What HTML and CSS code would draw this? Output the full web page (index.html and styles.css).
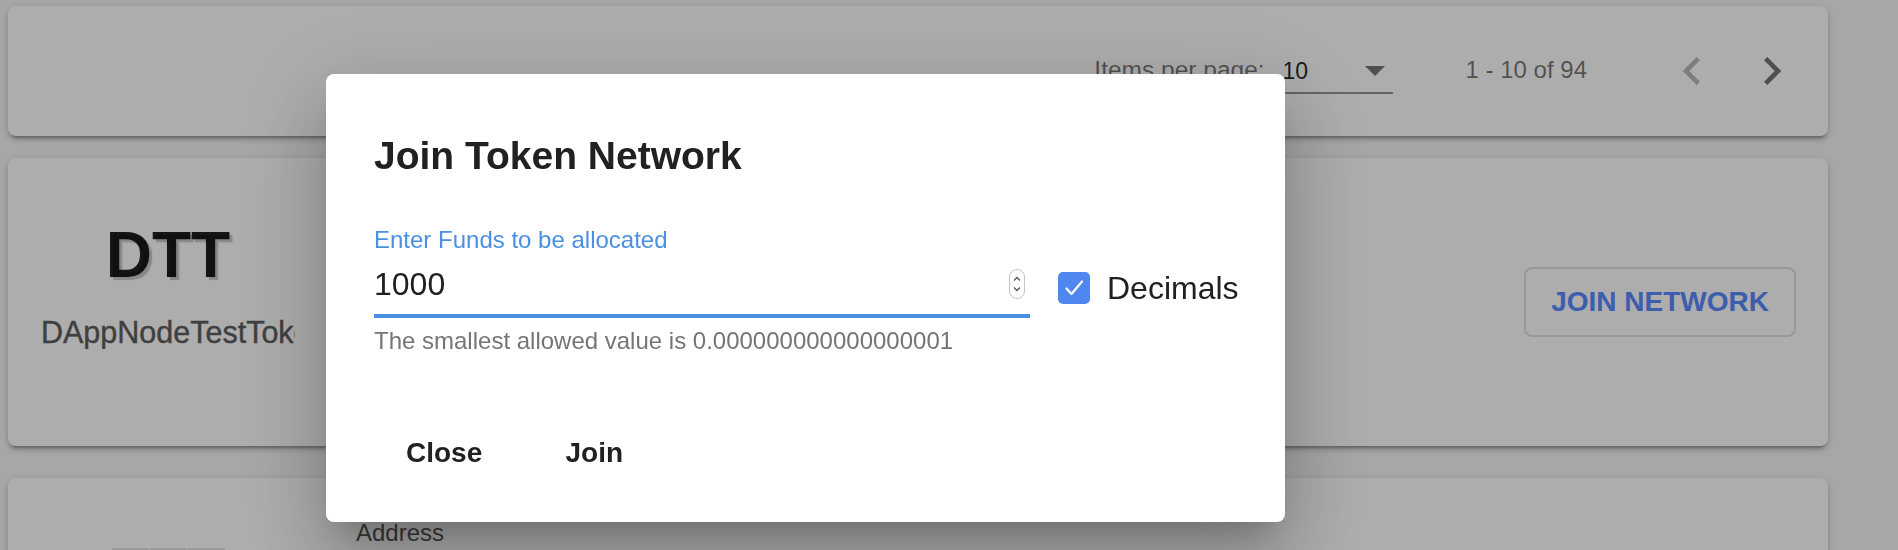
FILE: index.html
```html
<!DOCTYPE html>
<html lang="en">
<head>
<meta charset="utf-8">
<title>Join Token Network</title>
<link rel="stylesheet" href="styles.css">
</head>
<body>
<div class="page">
  <section class="card paginator-card">
    <div class="paginator">
      <span class="page-size-label">Items per page:</span>
      <div class="page-size-select">
        <span class="select-value">10</span>
        <span class="select-arrow"></span>
      </div>
      <span class="range-label">1 - 10 of 94</span>
      <button class="icon-btn prev" disabled aria-label="Previous page">
        <svg viewBox="0 0 24 24"><path d="M15.41 7.41L14 6l-6 6 6 6 1.41-1.41L10.83 12z"/></svg>
      </button>
      <button class="icon-btn next" aria-label="Next page">
        <svg viewBox="0 0 24 24"><path d="M10 6L8.59 7.41 13.17 12l-4.58 4.59L10 18l6-6z"/></svg>
      </button>
    </div>
  </section>

  <section class="card token-card">
    <div class="token-id">
      <div class="symbol">DTT</div>
      <div class="name">DAppNodeTestToken</div>
    </div>
    <div class="token-info"></div>
    <button class="stroked-btn">JOIN NETWORK</button>
  </section>

  <section class="card token-card next-card">
    <div class="token-id">
      <div class="blocks"><span></span><span></span><span></span></div>
    </div>
    <div class="token-info">
      <div class="info-label">Address</div>
    </div>
  </section>
</div>

<div class="backdrop"></div>

<div class="dialog" role="dialog">
  <h2 class="dialog-title">Join Token Network</h2>
  <div class="form-row">
    <div class="form-field">
      <div class="field-label">Enter Funds to be allocated</div>
      <div class="field-input">
        <span class="field-value">1000</span>
        <span class="spinner">
          <svg viewBox="0 0 16 30"><rect x="0.5" y="0.5" width="15" height="29" rx="7.5" fill="#fff" stroke="#c4c4c4"/><path d="M5 11.5l3-3 3 3M5 18.5l3 3 3-3" fill="none" stroke="#555" stroke-width="1.3"/></svg>
        </span>
      </div>
      <div class="field-underline"></div>
      <div class="field-hint">The smallest allowed value is 0.000000000000000001</div>
    </div>
    <label class="checkbox-label">
      <span class="checkbox">
        <svg viewBox="0 0 32 32"><path d="M8.5 16.5l5 5.5L24 9.5" fill="none" stroke="#fff" stroke-width="2.2" stroke-linecap="round" stroke-linejoin="round"/></svg>
      </span>
      <span class="checkbox-text">Decimals</span>
    </label>
  </div>
  <div class="dialog-actions">
    <button class="text-btn">Close</button>
    <button class="text-btn">Join</button>
  </div>
</div>
</body>
</html>
```

FILE: styles.css
```css
* { box-sizing: border-box; }

html, body {
  margin: 0;
  height: 100%;
  overflow: hidden;
}

body {
  background: #f6f6f6;
  font-family: "Liberation Sans", Arial, Helvetica, sans-serif;
  color: #212121;
}

.page {
  padding: 6px 70px 0 8px;
}

.card {
  background: #fff;
  border-radius: 8px;
  box-shadow: 0 6px 2px -4px rgba(0,0,0,.2), 0 4px 4px 0 rgba(0,0,0,.14), 0 2px 10px 0 rgba(0,0,0,.12);
}

/* paginator */
.paginator-card {
  height: 130px;
  display: flex;
  justify-content: flex-end;
  align-items: center;
  padding: 0 16px;
}

.paginator {
  display: flex;
  align-items: center;
  color: rgba(0,0,0,.54);
}

.page-size-label {
  font-size: 24.5px;
  line-height: 28px;
  margin: 0 18px 3px 0;
}

.page-size-select {
  width: 110px;
  display: flex;
  align-items: center;
  padding: 10px 0 8px;
  border-bottom: 2px solid rgba(0,0,0,.42);
}

.select-value {
  flex: 1;
  font-size: 23px;
  line-height: 26px;
  color: rgba(0,0,0,.87);
}

.select-arrow {
  width: 0;
  height: 0;
  border-left: 10px solid transparent;
  border-right: 10px solid transparent;
  border-top: 10px solid rgba(0,0,0,.54);
  margin-right: 8px;
}

.range-label {
  font-size: 24px;
  line-height: 26px;
  margin: 0 65px 3px 73px;
}

.icon-btn {
  width: 80px;
  height: 80px;
  border: 0;
  padding: 0;
  background: none;
  display: flex;
  align-items: center;
  justify-content: center;
}

.icon-btn svg {
  width: 56px;
  height: 56px;
  fill: rgba(0,0,0,.54);
}

.icon-btn.prev svg {
  fill: rgba(0,0,0,.28);
}

/* token cards */
.token-card {
  margin-top: 22px;
  height: 288px;
  display: flex;
  align-items: flex-start;
  padding: 0 32px 0 33px;
}

.token-id {
  width: 254px;
  flex: none;
  text-align: center;
  overflow: hidden;
  white-space: nowrap;
  padding-top: 59px;
}

.symbol {
  font-size: 64px;
  line-height: 76px;
  font-weight: 700;
  color: rgba(0,0,0,.88);
  text-shadow: 3px 3px 1px rgba(0,0,0,.22);
}

.name {
  font-size: 30.5px;
  line-height: 34px;
  margin-top: 22px;
  color: #5e5e5e;
  -webkit-text-stroke: 0.4px #5e5e5e;
}

.token-info {
  flex: 1;
  margin-left: 61px;
}

.stroked-btn {
  align-self: center;
  height: 70px;
  padding: 0 25px;
  border: 2px solid rgba(0,0,0,.12);
  border-radius: 8px;
  background: transparent;
  font-family: inherit;
  font-size: 28px;
  font-weight: 700;
  line-height: 66px;
  color: #5a8aff;
}

.next-card {
  margin-top: 32px;
  height: 300px;
}

.next-card .token-id {
  padding-top: 70px;
}

.blocks {
  display: flex;
  justify-content: center;
  gap: 1px;
}

.blocks span {
  width: 37px;
  height: 24px;
  background: #e3e3e3;
}

.next-card .token-info {
  padding-top: 41px;
}

.info-label {
  font-size: 24px;
  line-height: 28px;
  color: #555;
}

/* backdrop + dialog */
.backdrop {
  position: fixed;
  inset: 0;
  background: rgba(0,0,0,.32);
}

.dialog {
  position: fixed;
  left: 326px;
  top: 74px;
  width: 959px;
  background: #fff;
  border-radius: 8px;
  padding: 50px 48px 33px;
  box-shadow: 0 22px 30px -14px rgba(0,0,0,.2), 0 48px 76px 6px rgba(0,0,0,.14), 0 18px 92px 16px rgba(0,0,0,.12);
}

.dialog-title {
  margin: 0 0 38px;
  font-size: 39px;
  line-height: 64px;
  font-weight: 700;
  color: #212121;
}

.form-row {
  display: flex;
  align-items: flex-start;
}

.form-field {
  width: 656px;
  flex: none;
}

.field-label {
  font-size: 24px;
  line-height: 28px;
  color: #4a90e2;
  margin-bottom: 12px;
}

.field-input {
  display: flex;
  align-items: center;
  height: 36px;
  padding-right: 5px;
}

.field-value {
  flex: 1;
  font-size: 32px;
  line-height: 36px;
  color: #212121;
}

.spinner {
  display: flex;
  width: 16px;
  height: 30px;
}

.spinner svg {
  width: 16px;
  height: 30px;
}

.field-underline {
  height: 4px;
  margin-top: 12px;
  background: #4a90e2;
}

.field-hint {
  margin-top: 9px;
  font-size: 24px;
  line-height: 28px;
  color: #757575;
}

.checkbox-label {
  display: flex;
  align-items: center;
  height: 36px;
  margin: 44px 0 0 28px;
}

.checkbox {
  display: flex;
  width: 32px;
  height: 32px;
  border-radius: 5px;
  background: #4f87f0;
}

.checkbox svg {
  width: 32px;
  height: 32px;
}

.checkbox-text {
  margin-left: 17px;
  font-size: 32px;
  line-height: 36px;
  color: #212121;
}

.dialog-actions {
  display: flex;
  margin-top: 62px;
}

.text-btn {
  min-width: 128px;
  height: 72px;
  padding: 0 32px;
  border: 0;
  background: none;
  font-family: inherit;
  font-size: 28px;
  font-weight: 700;
  line-height: 72px;
  color: #212121;
}

.text-btn + .text-btn {
  margin-left: 16px;
}
```
